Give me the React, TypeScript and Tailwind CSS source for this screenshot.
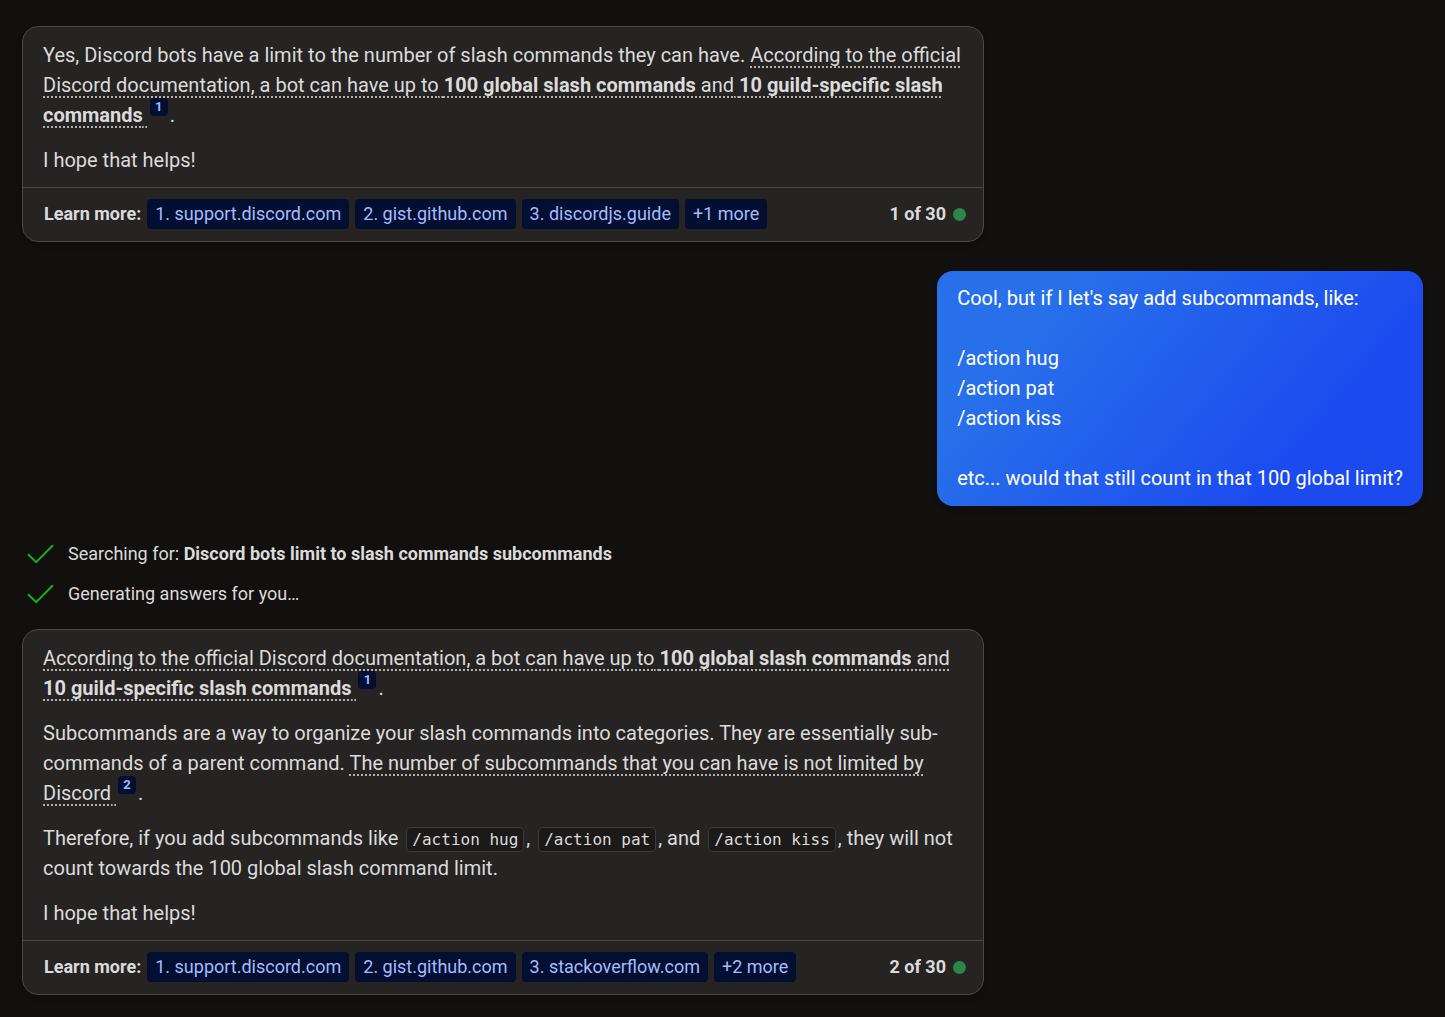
import type { ReactNode } from "react";

function Cited({ children, n }: { children: ReactNode; n: number }) {
  return (
    <>
      <a
        href="#source"
        className="underline decoration-[#b3b2b1] decoration-dotted decoration-2 underline-offset-4"
      >
        {children}{" "}
      </a>
      <a
        href="#source"
        aria-label={`Source ${n}`}
        className="-mt-3 mr-0.5 ml-0.5 inline-flex h-[18px] w-[18px] items-center justify-center rounded bg-[#020f30] align-[11px] text-[13px] leading-none font-bold text-[#a6bbff]"
      >
        {n}
      </a>
    </>
  );
}

function Code({ children }: { children: ReactNode }) {
  return (
    <code className="mr-0.5 ml-[3px] rounded border border-[#3b3a39] bg-[#1b1a19] px-[5px] py-0.5 font-['DejaVu_Sans_Mono',monospace] text-base leading-none">
      {children}
    </code>
  );
}

function AnswerCard({
  children,
  sources,
  more,
  count,
}: {
  children: ReactNode;
  sources: string[];
  more: string;
  count: string;
}) {
  return (
    <article className="w-full max-w-[962px] rounded-2xl border border-[#4a4948] bg-[#252423] shadow-md">
      <div className="space-y-[15px] px-5 pt-[13px] pb-3 text-xl leading-[30px]">
        {children}
      </div>
      <footer className="flex items-center gap-1.5 border-t border-[#4a4948] px-[21px] pt-[11px] pb-3 text-lg leading-[30px]">
        <span className="font-bold">Learn more:</span>
        {sources.map((s, i) => (
          <a key={s} href="#source" className="rounded bg-[#020f30] px-2 text-[#a6bbff]">
            {i + 1}. {s}
          </a>
        ))}
        <button type="button" className="rounded bg-[#020f30] px-2 text-[#a6bbff]">
          {more}
        </button>
        <span className="ml-auto font-bold">{count}</span>
        <span className="mr-[-4px] ml-px h-[13px] w-[13px] rounded-full bg-[#2d8649]" />
      </footer>
    </article>
  );
}

function Step({ children }: { children: ReactNode }) {
  return (
    <li className="flex items-center gap-3.5 text-lg leading-6">
      <svg viewBox="0 0 32 24" className="h-6 w-8" fill="none" stroke="#13b313" strokeWidth="2" aria-hidden="true">
        <path d="M6 12.2 L14.2 20.2 L31 3.2" />
      </svg>
      <span>{children}</span>
    </li>
  );
}

export default function App() {
  return (
    <main className="flex min-h-screen flex-col bg-[#11100f] px-[22px] pt-[26px] pb-[22px] font-['Roboto',sans-serif] text-[#dcdbda]">
      <AnswerCard
        sources={["support.discord.com", "gist.github.com", "discordjs.guide"]}
        more="+1 more"
        count="1 of 30"
      >
        <p>
          Yes, Discord bots have a limit to the number of slash commands they can have.{" "}
          <Cited n={1}>
            According to the official Discord documentation, a bot can have up to{" "}
            <strong>100 global slash commands</strong> and{" "}
            <strong>10 guild-specific slash commands</strong>
          </Cited>
          .
        </p>
        <p>I hope that helps!</p>
      </AnswerCard>

      <p className="mt-[29px] self-end rounded-2xl bg-[linear-gradient(130deg,#2870ea_20%,#1b4aef_77.5%)] px-5 pt-3 pb-[13px] text-xl leading-[30px] whitespace-pre-line text-white shadow-md">
        {"Cool, but if I let's say add subcommands, like:\n\n/action hug\n/action pat\n/action kiss\n\netc... would that still count in that 100 global limit?"}
      </p>

      <ul className="mt-9 mb-[23px] space-y-4">
        <Step>
          Searching for: <strong>Discord bots limit to slash commands subcommands</strong>
        </Step>
        <Step>Generating answers for you…</Step>
      </ul>

      <AnswerCard
        sources={["support.discord.com", "gist.github.com", "stackoverflow.com"]}
        more="+2 more"
        count="2 of 30"
      >
        <p>
          <Cited n={1}>
            According to the official Discord documentation, a bot can have up to{" "}
            <strong>100 global slash commands</strong> and{" "}
            <strong>10 guild-specific slash commands</strong>
          </Cited>
          .
        </p>
        <p>
          Subcommands are a way to organize your slash commands into categories. They are
          essentially sub-commands of a parent command.{" "}
          <Cited n={2}>The number of subcommands that you can have is not limited by Discord</Cited>.
        </p>
        <p>
          Therefore, if you add subcommands like <Code>/action hug</Code>,{" "}
          <Code>/action pat</Code>, and <Code>/action kiss</Code>, they will not count towards the
          100 global slash command limit.
        </p>
        <p>I hope that helps!</p>
      </AnswerCard>
    </main>
  );
}
